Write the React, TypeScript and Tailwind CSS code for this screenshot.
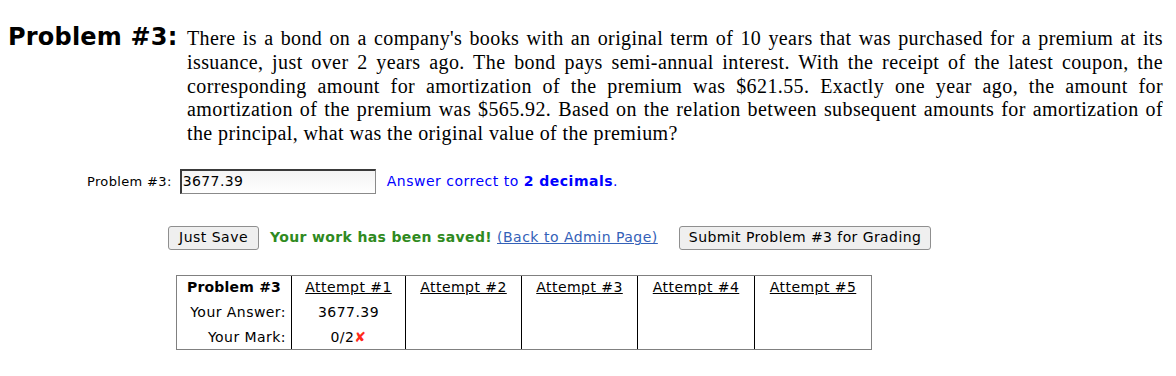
import React from "react";

const sans = { fontFamily: '"DejaVu Sans", Verdana, sans-serif' };
const serif = { fontFamily: '"Liberation Serif", "Times New Roman", serif' };

const lines = [
  "There is a bond on a company's books with an original term of 10 years that was purchased for a premium at its",
  "issuance, just over 2 years ago. The bond pays semi-annual interest. With the receipt of the latest coupon, the",
  "corresponding amount for amortization of the premium was $621.55. Exactly one year ago, the amount for",
  "amortization of the premium was $565.92. Based on the relation between subsequent amounts for amortization of",
];

export default function App() {
  const attempts = ["Attempt #1", "Attempt #2", "Attempt #3", "Attempt #4", "Attempt #5"];
  const widths = ["w-[114px]", "w-[116px]", "w-[116px]", "w-[117px]", "flex-1"];
  return (
    <div className="w-[1176px] h-[376px] bg-white text-black overflow-hidden" style={sans}>
      <div className="flex items-baseline pl-[8px] pt-[25px]">
        <div className="w-[179px] shrink-0 text-[24px] font-bold leading-[24px] tracking-[0.2px]">Problem #3:</div>
        <div className="w-[976px] text-[20px] leading-[23.8px] tracking-[0.4px]" style={serif}>
          {lines.map((l) => (
            <div key={l} className="whitespace-nowrap text-justify [text-align-last:justify]">
              {l}
            </div>
          ))}
          <div className="whitespace-nowrap">the principal, what was the original value of the premium?</div>
        </div>
      </div>

      <div className="flex items-center mt-[23px] pl-[87px] h-[25px]">
        <span className="text-[13px] tracking-[0.35px]">Problem #3:</span>
        <div className="ml-[8px] w-[196px] h-[25px] border-t-2 border-l-2 border-b border-r border-t-[#3a3a3a] border-l-[#3a3a3a] border-b-[#8a8a8a] border-r-[#8a8a8a] bg-gradient-to-b from-[#f4f4f4] to-white flex items-center pl-[1px] text-[14px] tracking-[0.4px]">
          3677.39
        </div>
        <span className="ml-[11px] text-[#0000ff] text-[14px] tracking-[0.5px]">
          Answer correct to <b>2 decimals</b>.
        </span>
      </div>

      <div className="flex items-center mt-[32px] pl-[168px] h-[24px] text-[14px] tracking-[0.5px]">
        <button className="h-[24px] px-[10px] bg-[#efefef] border border-[#8f8f8f] rounded-[3px] text-black tracking-[0.5px]" style={sans}>
          Just Save
        </button>
        <span className="ml-[11px] font-bold text-[#2f8a21] tracking-[0.35px]">Your work has been saved!</span>
        <a className="ml-[5px] text-[#3461b8] underline tracking-[0.5px]">(Back to Admin Page)</a>
        <button className="ml-[21px] h-[24px] px-[9px] bg-[#efefef] border border-[#8f8f8f] rounded-[3px] text-black tracking-[0.42px]" style={sans}>
          Submit Problem #3 for Grading
        </button>
      </div>

      <div className="mt-[25px] ml-[176px] w-[696px] border border-[#808080] flex text-[14px] tracking-[0.45px]">
        <div className="w-[115px] flex flex-col pt-[1px] border-r border-black">
          <div className="h-[22px] flex items-center justify-center font-bold tracking-[0.2px]">Problem #3</div>
          <div className="h-[27px] flex items-center justify-end pr-[5px]">Your Answer:</div>
          <div className="h-[23px] flex items-center justify-end pr-[5px]">Your Mark:</div>
        </div>
        {attempts.map((a, i) => (
          <div key={a} className={`flex flex-col pt-[1px] ${i < 4 ? "border-r border-black" : ""} ${widths[i]}`}>
            <div className="h-[22px] flex items-center justify-center underline">{a}</div>
            {i === 0 ? (
              <>
                <div className="h-[27px] flex items-center justify-center">3677.39</div>
                <div className="h-[23px] flex items-center justify-center">
                  0/2<span className="text-[#ff2a1a] font-bold">✘</span>
                </div>
              </>
            ) : null}
          </div>
        ))}
      </div>
    </div>
  );
}
